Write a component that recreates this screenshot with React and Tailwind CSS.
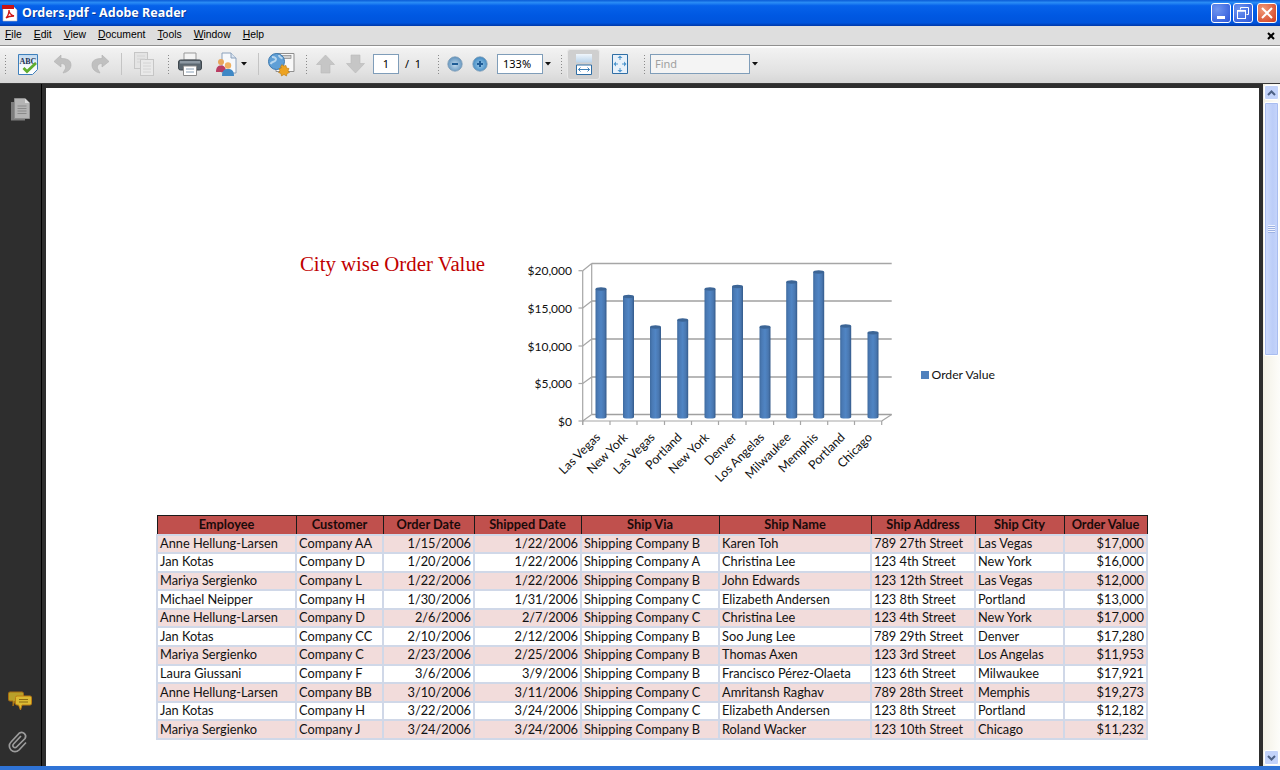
import React from "react";

const rows = [
  ["Anne Hellung-Larsen","Company AA","1/15/2006","1/22/2006","Shipping Company B","Karen Toh","789 27th Street","Las Vegas","$17,000"],
  ["Jan Kotas","Company D","1/20/2006","1/22/2006","Shipping Company A","Christina Lee","123 4th Street","New York","$16,000"],
  ["Mariya Sergienko","Company L","1/22/2006","1/22/2006","Shipping Company B","John Edwards","123 12th Street","Las Vegas","$12,000"],
  ["Michael Neipper","Company H","1/30/2006","1/31/2006","Shipping Company C","Elizabeth Andersen","123 8th Street","Portland","$13,000"],
  ["Anne Hellung-Larsen","Company D","2/6/2006","2/7/2006","Shipping Company C","Christina Lee","123 4th Street","New York","$17,000"],
  ["Jan Kotas","Company CC","2/10/2006","2/12/2006","Shipping Company B","Soo Jung Lee","789 29th Street","Denver","$17,280"],
  ["Mariya Sergienko","Company C","2/23/2006","2/25/2006","Shipping Company B","Thomas Axen","123 3rd Street","Los Angelas","$11,953"],
  ["Laura Giussani","Company F","3/6/2006","3/9/2006","Shipping Company B","Francisco Pérez-Olaeta","123 6th Street","Milwaukee","$17,921"],
  ["Anne Hellung-Larsen","Company BB","3/10/2006","3/11/2006","Shipping Company C","Amritansh Raghav","789 28th Street","Memphis","$19,273"],
  ["Jan Kotas","Company H","3/22/2006","3/24/2006","Shipping Company C","Elizabeth Andersen","123 8th Street","Portland","$12,182"],
  ["Mariya Sergienko","Company J","3/24/2006","3/24/2006","Shipping Company B","Roland Wacker","123 10th Street","Chicago","$11,232"],
];
const heads = ["Employee","Customer","Order Date","Shipped Date","Ship Via","Ship Name","Ship Address","Ship City","Order Value"];
const widths = ["w-[139px]","w-[87px]","w-[91px]","w-[107px]","w-[138px]","w-[152px]","w-[104px]","w-[89px]","w-[83px]"];

const bars = [
  [601,289,"Las Vegas"],[628.5,296.5,"New York"],[655.5,327,"Las Vegas"],[682.7,320,"Portland"],
  [710,289,"New York"],[737.5,286.5,"Denver"],[765,327,"Los Angelas"],[791.7,282,"Milwaukee"],
  [818.7,272,"Memphis"],[845.7,326,"Portland"],[873,332.7,"Chicago"],
];

function Chart() {
  const ticks = [582.7,610,637,664.5,691.5,718.5,746,773.6,800.5,827.7,854.5,881.7];
  const grid = [263.5,301,339,377,414.5];
  const front = [270.7,308,346,383.5,421];
  const labels = ["$20,000","$15,000","$10,000","$5,000","$0"];
  return (
    <svg viewBox="520 255 490 235" width="490" height="235" className="block shrink-0" style={{fontFamily:'Lato, "Open Sans", sans-serif'}}>
      <defs>
        <linearGradient id="bar" x1="0" x2="1" y1="0" y2="0">
          <stop offset="0" stopColor="#3f6b9f"/><stop offset="0.2" stopColor="#4a7ab5"/>
          <stop offset="0.5" stopColor="#5085c4"/><stop offset="0.8" stopColor="#4977b0"/>
          <stop offset="1" stopColor="#345a8a"/>
        </linearGradient>
      </defs>
      <g stroke="#a6a6a6" strokeWidth="1.2" fill="none">
        {grid.map((y,i)=><line key={y} x1="591.7" x2="891.7" y1={y} y2={y} stroke={i===0?"#a6a6a6":"#a0a0a0"} strokeWidth="1.6"/>)}
        <line x1="591.7" x2="591.7" y1="263.5" y2="414.5"/>
        {grid.map((y,i)=><line key={i} x1="582.7" y1={front[i]} x2="591.7" y2={y}/>)}
        {front.map(y=><line key={y} x1="578.5" x2="582.7" y1={y} y2={y}/>)}
        <line x1="582.7" x2="582.7" y1="270.7" y2="425"/>
        <line x1="582.7" x2="881.7" y1="421" y2="421"/>
        <line x1="881.7" y1="421" x2="891.7" y2="414.5"/>
        {ticks.map(x=><line key={x} x1={x} x2={x} y1="421" y2="425"/>)}
      </g>
      {bars.map(([x,t])=>(
        <g key={x}>
          <path d={`M${x-5.5} ${t} V417 A5.5 1.6 0 0 0 ${x+5.5} 417 V${t} Z`} fill="url(#bar)"/>
          <ellipse cx={x} cy={t} rx="5.5" ry="1.7" fill="#3c6596"/>
        </g>
      ))}
      {labels.map((l,i)=><text key={l} x="572" y={front[i]+4.6} textAnchor="end" fontSize="12" fill="#111">{l}</text>)}
      {bars.map(([x,,l],i)=><text key={i} x={x} y="438" textAnchor="end" fontSize="12.3" fill="#111" transform={`rotate(-45 ${x} 438)`}>{l}</text>)}
      <rect x="921" y="371" width="8" height="8" fill="#4f81bd"/>
      <text x="931.5" y="379" fontSize="12.2" fill="#111">Order Value</text>
    </svg>
  );
}

const Grip = ({ml}) => (
  <div className={`${ml} w-[3px] h-[21px] shrink-0 bg-[radial-gradient(circle,#8a8a8a_0.7px,transparent_0.8px)] bg-[length:3px_3px]`} />
);
const Sep = ({ml}) => <div className={`${ml} w-px h-[22px] shrink-0 bg-[#c4c4c4]`} />;
const Caret = ({ml}) => (
  <svg width="6" height="4" viewBox="0 0 6 4" className={`${ml} shrink-0`}><path d="M0 0h6L3 3.5z" fill="#111"/></svg>
);

const AbcIcon = () => (
  <svg width="20" height="21" viewBox="0 0 20 21" className="shrink-0">
    <defs><linearGradient id="abc" x1="0" x2="0" y1="0" y2="1"><stop offset="0" stopColor="#bcd6ee"/><stop offset="0.55" stopColor="#f4f8fc"/><stop offset="1" stopColor="#fff"/></linearGradient></defs>
    <path d="M.5.5h19v15l-5 5H.5z" fill="url(#abc)" stroke="#3f80bc"/>
    <text x="1.500" y="9.500" fontSize="8" fontWeight="700" fontFamily="Liberation Serif, serif" fill="#223355">ABC</text>
    <path d="M5.500 14l3.500 3.500L18 9" fill="none" stroke="#5fae2e" strokeWidth="2.800"/>
  </svg>
);
const Undo = ({flip}) => (
  <svg width="19" height="20" viewBox="0 0 19 20" className="shrink-0" style={flip?{transform:"scaleX(-1)"}:undefined}>
    <path d="M8 1L1 7.500 8 13V9.500c3 0 5 1.500 4.500 5L10 19c5-1 8-4 8-8 0-5-4-6.500-10-6.500z" fill="#c0c0c0" stroke="#b0b0b0" strokeWidth="0.600"/>
  </svg>
);
const CopyIcon = () => (
  <svg width="20" height="24" viewBox="0 0 20 24" className="shrink-0">
    <rect x="0.500" y="0.500" width="13" height="16" fill="#e4e4e4" stroke="#c6c6c6"/>
    <rect x="6.500" y="7.500" width="13" height="16" fill="#e9e9e9" stroke="#c6c6c6"/>
    <path d="M3 4h8M3 7h8M3 10h3M9 11h8M9 14h8M9 17h8M9 20h8" stroke="#d4d4d4"/>
  </svg>
);
const PrintIcon = () => (
  <svg width="24" height="24" viewBox="0 0 24 24" className="shrink-0">
    <path d="M6 1h12v7H6z" fill="#f4f4f4" stroke="#999"/>
    <rect x="0.500" y="8" width="23" height="10" rx="2" fill="#5b6770" stroke="#3f474e"/>
    <rect x="2" y="9" width="20" height="2.500" fill="#8d99a3"/>
    <path d="M5.500 14h13v9.500h-13z" fill="#fff" stroke="#8a8a8a"/>
    <path d="M8 17h8M8 20h8" stroke="#8aa0b5"/>
  </svg>
);
const PeopleIcon = () => (
  <svg width="22" height="25" viewBox="0 0 22 25" className="shrink-0">
    <path d="M7 1h9l5 5v15H7z" fill="#f6f8fb" stroke="#8aa0bb"/>
    <path d="M16 1v5h5" fill="#d9e4f0" stroke="#8aa0bb"/>
    <circle cx="6" cy="10" r="3" fill="#e8a55a"/>
    <path d="M1 20c0-5 2-6.500 5-6.500s5 1.500 5 6.500z" fill="#b93d63"/>
    <circle cx="13" cy="13.500" r="3.200" fill="#f0b060"/>
    <path d="M7 24c0-5.500 2.500-7 6-7s6 1.500 6 7z" fill="#3f88c5"/>
  </svg>
);
const GlobeIcon = () => (
  <svg width="27" height="25" viewBox="0 0 27 25" className="shrink-0">
    <path d="M8 1.500h18v18H8z" fill="#f8f8f8" stroke="#8f8f8f"/>
    <rect x="11" y="3.500" width="12" height="3" fill="#cfcfcf" stroke="#777" strokeWidth="0.600"/>
    <circle cx="8.500" cy="9.500" r="8" fill="#5f9fd6" stroke="#3c78ae"/>
    <path d="M4 5c3 0 5 1.500 3.500 3.500S4 9 2.500 12M11 3c0 2 2.500 3 3.500 3.500" stroke="#b7d6ee" strokeWidth="2" fill="none"/>
    <path d="M12.500 15l1.500-2.500 1.500 1.500 2.500-.5.500 2.500 2.500.5-1 2.500 1.500 1.500-2.500 1-.5 2.500-2.500-1.500-2.500 1.500-.5-2.500-2.500-1 1.500-1.500-1-2.500 2.500-.5z" fill="#eda321" stroke="#b9760d" strokeWidth="0.600"/>
  </svg>
);
const Arrow = ({down}) => (
  <svg width="19" height="20" viewBox="0 0 19 20" className="shrink-0" style={down?{transform:"scaleY(-1)"}:undefined}>
    <path d="M9.500 1L18.500 10.500H14V19H5V10.500H0.500z" fill="#c6c6c6" stroke="#b8b8b8" strokeWidth="0.600"/>
  </svg>
);
const Zoom = ({plus}) => (
  <svg width="16" height="16" viewBox="0 0 16 16" className="shrink-0">
    <defs><radialGradient id={plus?"zp":"zm"} cx="0.500" cy="0.550" r="0.550"><stop offset="0" stopColor={plus?"#9dccec":"#c0d8ec"}/><stop offset="1" stopColor={plus?"#3f87c0":"#5f92bd"}/></radialGradient></defs>
    <circle cx="8" cy="8" r="7.200" fill={`url(#${plus?"zp":"zm"})`} stroke="#7b9ab5" strokeWidth="0.800"/>
    <path d={plus?"M5 8h6M8 5v6":"M5 8h6"} stroke="#1f5c96" strokeWidth="2"/>
  </svg>
);
const FitWidth = () => (
  <svg width="16" height="21" viewBox="0 0 16 21" className="shrink-0">
    <defs><linearGradient id="fw" x1="0" x2="0" y1="0" y2="1"><stop offset="0" stopColor="#f0f6fc"/><stop offset="1" stopColor="#b9d3ea"/></linearGradient></defs>
    <path d="M0 0h16v8.500H0z" fill="url(#fw)"/>
    <path d="M.500 11h15v9.500h-15z" fill="#fff" stroke="#2f6ea5"/>
    <path d="M2.500 15.500h11M2.500 15.500l2-2M2.500 15.500l2 2M13.500 15.500l-2-2M13.500 15.500l-2 2" stroke="#3b7fb8" fill="none"/>
  </svg>
);
const FitPage = () => (
  <svg width="16" height="20" viewBox="0 0 16 20" className="shrink-0">
    <path d="M.500.500h15v19h-15z" fill="#e8f1fa" stroke="#2f6ea5"/>
    <g fill="#4f97cf">
      <path d="M8 1.500l2.500 2.500h-5zM8 18.500l2.500-2.500h-5zM1.500 10L4 7.500v5zM14.500 10L12 7.500v5z"/>
    </g>
    <path d="M8 4v2M8 14v2M4 10h2M10 10h2" stroke="#4f97cf"/>
  </svg>
);
const PagesIcon = () => (
  <svg width="19" height="23" viewBox="0 0 19 23">
    <rect x="0" y="4" width="14" height="18.500" fill="#7c7c7c"/>
    <path d="M3.500.500h10.500l4.500 4.500v15.500H3.500z" fill="#b4b4b4" stroke="#8e8e8e"/>
    <path d="M14 .500v4.500h4.500z" fill="#dcdcdc"/>
    <path d="M6.500 8h9M6.500 10.500h9M6.500 13h9M6.500 15.500h9" stroke="#8a8a8a"/>
  </svg>
);
const Comments = () => (
  <svg width="24" height="20" viewBox="0 0 24 20">
    <path d="M2 1h12a1.500 1.500 0 0 1 1.500 1.500v6A1.500 1.500 0 0 1 14 10H7l-2 5v-5H2A1.500 1.500 0 0 1 .5 8.500v-6A1.500 1.500 0 0 1 2 1z" fill="#b9a02a" stroke="#a86d10"/>
    <path d="M9 5h13a1.500 1.500 0 0 1 1.500 1.500v6A1.500 1.500 0 0 1 22 14h-8l-1.500 5-2-5H9a1.500 1.500 0 0 1-1.500-1.500v-6A1.500 1.500 0 0 1 9 5z" fill="#dcbb33" stroke="#bd7c12"/>
    <path d="M11 8.500h9M11 11h9" stroke="#8a6a12"/>
  </svg>
);
const Clip = () => (
  <svg width="22" height="24" viewBox="0 0 22 24" fill="none">
    <path d="M13 7L5.500 15a2 2 0 0 0 3 3L17 9.500a4 4 0 0 0-5.500-5.500L3 13a5.500 5.500 0 0 0 8 8l7-7.500" stroke="#9c9c9c" strokeWidth="1.700"/>
  </svg>
);
const Menu = ({children, u}) => (
  <span className="text-[10.400px] leading-none text-black font-['Liberation_Sans',sans-serif]"><span className="underline">{u}</span>{children}</span>
);
const WinBtn = ({ml, cls, children}) => (
  <div className={`${ml} w-[20px] h-[20px] rounded-[3px] border border-white flex items-center justify-center ${cls}`}>{children}</div>
);

export default function App() {
  return (
    <div className="w-[1280px] h-[770px] overflow-hidden flex flex-col bg-[#2e2e2e] font-['Noto_Sans',sans-serif]">
      <div className="h-[26px] shrink-0 flex items-center bg-[linear-gradient(180deg,#0a5bd6_0%,#2a8cf5_10%,#0662ea_22%,#0058e2_60%,#0054dc_88%,#0038a8_100%)]">
        <svg width="16" height="17" viewBox="0 0 16 17" className="ml-[2px] shrink-0">
          <path d="M1 1h10l4 4v11H1z" fill="#fff" stroke="#c8b8b8" strokeWidth="0.600"/>
          <rect x="0" y="0" width="12" height="4" fill="#c81414"/>
          <path d="M4 13c2-2 3-5 3-8 0 3 2 5 5 6-3 0-6 .500-8 2z" fill="none" stroke="#d01818" strokeWidth="1.300"/>
        </svg>
        <span className="ml-[4px] text-[12.500px] leading-none font-bold text-white font-['Noto_Sans',sans-serif] [text-shadow:1px_1px_0_#0a3a9a]">Orders.pdf - Adobe Reader</span>
        <div className="ml-auto mr-[3px] flex items-center">
          <WinBtn cls="bg-[radial-gradient(circle_at_30%_30%,#6f95f0,#2a55d8)]"><div className="w-[8px] h-[3px] bg-white mt-[8px] -ml-[1px]"/></WinBtn>
          <WinBtn ml="ml-[2px]" cls="bg-[radial-gradient(circle_at_30%_30%,#6f95f0,#2a55d8)]">
            <svg width="12" height="12" viewBox="0 0 12 12" fill="none" stroke="#fff"><path d="M3.500 2.500v-2h8v7h-2"/><rect x=".5" y="3.500" width="8" height="8"/><path d="M.5 4h8" strokeWidth="1.500"/></svg>
          </WinBtn>
          <WinBtn ml="ml-[4px]" cls="bg-[radial-gradient(circle_at_30%_30%,#f09a78,#d03a1c)]">
            <svg width="12" height="12" viewBox="0 0 12 12"><path d="M1 1l10 10M11 1L1 11" stroke="#fff" strokeWidth="2"/></svg>
          </WinBtn>
        </div>
      </div>

      <div className="h-[19px] shrink-0 bg-[#dedede] flex items-center pl-[5px] gap-[12px]">
        <Menu u="F">ile</Menu><Menu u="E">dit</Menu><Menu u="V">iew</Menu><Menu u="D">ocument</Menu>
        <Menu u="T">ools</Menu><Menu u="W">indow</Menu><Menu u="H">elp</Menu>
        <span className="ml-auto mr-[5px]"><svg width="8" height="8" viewBox="0 0 8 8" className="block"><path d="M1 1l6 6M7 1L1 7" stroke="#000" strokeWidth="2"/></svg></span>
      </div>

      <div className="h-[39px] shrink-0 pb-[1px] border-t border-t-[#8f8f8f] border-b border-b-[#3a3a3a] bg-[linear-gradient(180deg,#ffffff_0%,#ffffff_3%,#f2f2f2_6%,#e2e2e2_70%,#d6d6d6_100%)] flex items-center">
        <Grip ml="ml-[4px]"/>
        <div className="ml-[11px]"><AbcIcon/></div>
        <div className="ml-[15px]"><Undo/></div>
        <div className="ml-[19px]"><Undo flip/></div>
        <Sep ml="ml-[11px]"/>
        <div className="ml-[12px]"><CopyIcon/></div>
        <Grip ml="ml-[13px]"/>
        <div className="ml-[8px]"><PrintIcon/></div>
        <div className="ml-[13px]"><PeopleIcon/></div>
        <Caret ml="ml-[4px]"/>
        <Sep ml="ml-[11px]"/>
        <div className="ml-[9px]"><GlobeIcon/></div>
        <Grip ml="ml-[10px]"/>
        <div className="ml-[8px]"><Arrow/></div>
        <div className="ml-[11px]"><Arrow down/></div>
        <div className="ml-[8px] w-[26px] h-[20px] bg-white border border-[#7f9db9] flex items-center justify-center text-[11px] text-black">1</div>
        <span className="ml-[6px] text-[11px] text-black w-[16px] flex justify-between"><span>/</span><span>1</span></span>
        <Grip ml="ml-[16px]"/>
        <div className="ml-[7px]"><Zoom/></div>
        <div className="ml-[9px]"><Zoom plus/></div>
        <div className="ml-[9px] w-[46px] h-[20px] bg-white border border-[#7f9db9] flex items-center pl-[5px] text-[11px] text-black">133%</div>
        <Caret ml="ml-[2px]"/>
        <Grip ml="ml-[9px]"/>
        <div className="ml-[4px] w-[33px] h-[31px] rounded-[3px] bg-[#cfcfcf] border border-[#e8e8e8] flex items-center justify-center"><FitWidth/></div>
        <div className="ml-[12px]"><FitPage/></div>
        <Grip ml="ml-[15px]"/>
        <div className="ml-[4px] w-[100px] h-[20px] bg-[#f4f4f4] border border-[#7f9db9] flex items-center pl-[4px] text-[11px] text-[#a0a0a0]">Find</div>
        <Caret ml="ml-[2px]"/>
      </div>

      <div className="flex-1 flex min-h-0">
        <div className="w-[41px] shrink-0 bg-[#2e2e2e] flex flex-col items-center">
          <div className="mt-[14px]"><PagesIcon/></div>
          <div className="mt-auto mb-[18px] ml-[-2px]"><Comments/></div>
          <div className="mb-[13px] ml-[-4px]"><Clip/></div>
        </div>
        <div className="w-[1px] shrink-0 bg-black"/>
        <div className="w-[4px] shrink-0 bg-[#2e2e2e]"/>
        <div className="w-[1213px] shrink-0 mt-[4px] bg-white overflow-hidden">
          <div className="flex items-start pt-[167px]">
            <div className="ml-[254px] w-[220px] shrink-0 font-['Liberation_Serif',serif] text-[20.800px] leading-[24px] text-[#c00000] mt-[-3px] whitespace-nowrap">City wise Order Value</div>
            <Chart/>
          </div>
          <table className="ml-[110px] mt-[25px] w-[990px] table-fixed border-collapse font-['Lato',sans-serif] text-[12.800px] text-[#111]">
            <colgroup>{widths.map(w=><col key={w} className={w}/>)}</colgroup>
            <thead>
              <tr className="h-[19px] bg-[#c0504d]">
                {heads.map(h=><th key={h} className="border border-[#1a1a1a] p-0 font-bold text-center leading-none text-[#1a0a0a]">{h}</th>)}
              </tr>
            </thead>
            <tbody>
              {rows.map((r,i)=>(
                <tr key={i} className={`h-[18.600px] ${i%2===0?"bg-[#f2dcdb]":"bg-white"}`}>
                  {r.map((c,j)=>(
                    <td key={j} className={`border-2 border-[#d0d8e8] pt-0 pb-[1px] leading-none whitespace-nowrap ${j===8?"text-right pr-[2px]":j===2||j===3?"text-right pr-[2px]":"text-left pl-[2px]"}`}>{c}</td>
                  ))}
                </tr>
              ))}
            </tbody>
          </table>
        </div>
        <div className="w-[4px] shrink-0 bg-[#2e2e2e]"/>
        <div className="w-[17px] shrink-0 bg-[linear-gradient(90deg,#f3f1e6,#fdfdfa)] flex flex-col items-center">
          <div className="mt-[1px] w-[15px] h-[15px] rounded-[2px] border border-white bg-[#c3d3fa] flex items-center justify-center">
            <svg width="9" height="6" viewBox="0 0 9 6" fill="none"><path d="M1 5l3.500-3.500L8 5" stroke="#4d6185" strokeWidth="2"/></svg>
          </div>
          <div className="mt-[2px] w-[15px] h-[254px] rounded-[2px] border border-white outline outline-[#a8bdf0] -outline-offset-2 bg-[linear-gradient(90deg,#cfdcfc,#bccdf8_60%,#c6d5fb)] flex items-center justify-center">
            <div className="w-[7px] h-[8px] bg-[repeating-linear-gradient(180deg,#eef2fe_0_1px,#9db2e4_1px_2px)]"/>
          </div>
          <div className="mt-auto mb-[1px] w-[15px] h-[15px] rounded-[2px] border border-white bg-[#c3d3fa] flex items-center justify-center">
            <svg width="9" height="6" viewBox="0 0 9 6" fill="none"><path d="M1 1l3.500 3.500L8 1" stroke="#4d6185" strokeWidth="2"/></svg>
          </div>
        </div>
      </div>
      <div className="h-[4px] shrink-0 bg-[#2f73d6]"/>
    </div>
  );
}
